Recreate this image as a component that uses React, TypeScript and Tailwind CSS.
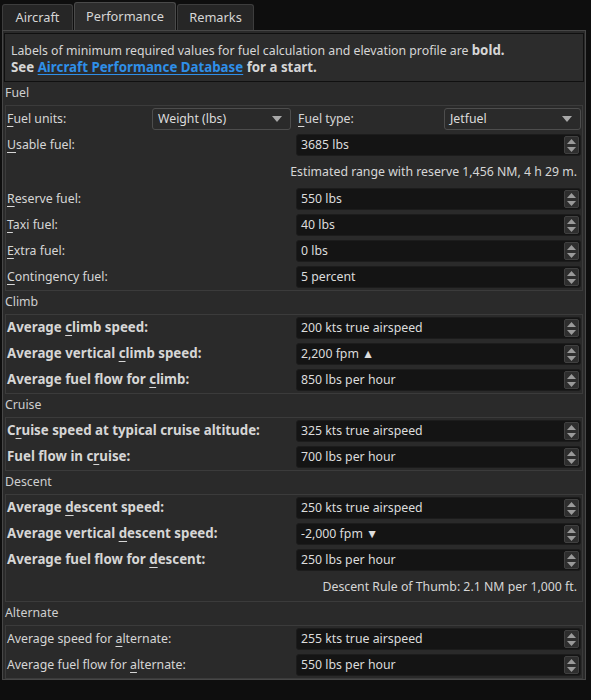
import React from "react";

const font = { fontFamily: '"Noto Sans", "Liberation Sans", sans-serif' };

function M({ pre = "", k, post = "" }: { pre?: string; k: string; post?: string }) {
  return (
    <>
      {pre}
      <span className="underline decoration-1 underline-offset-[3px]">{k}</span>
      {post}
    </>
  );
}

function Spin({ value }: { value: React.ReactNode }) {
  return (
    <div className="flex h-[22px] flex-1 items-stretch rounded-[3px] border border-[#1c1c1c] bg-[#141414]">
      <div className="flex flex-1 items-center pl-[4px] text-[#dcdcdc]">{value}</div>
      <div className="m-[1px] flex w-[15px] flex-col items-center justify-center gap-[3px] rounded-[2px] border border-[#404040] bg-[#2e2e2e]">
        <svg width="9" height="5" viewBox="0 0 9 5"><path d="M4.5 0L9 5H0z" fill="#9a9a9a" /></svg>
        <svg width="9" height="5" viewBox="0 0 9 5"><path d="M0 0h9L4.5 5z" fill="#9a9a9a" /></svg>
      </div>
    </div>
  );
}

function Combo({ value, className }: { value: string; className: string }) {
  return (
    <div className={`flex h-[22px] items-center justify-between rounded-[3px] border border-[#4d4d4d] bg-[#2a2a2a] pl-[5px] pr-[8px] text-[#dcdcdc] ${className}`}>
      <span>{value}</span>
      <svg width="10" height="6" viewBox="0 0 10 6"><path d="M0 0h10L5 6z" fill="#a8a8a8" /></svg>
    </div>
  );
}

function Row({ label, value, bold }: { label: React.ReactNode; value: React.ReactNode; bold?: boolean }) {
  return (
    <div className="flex h-[22px] items-center">
      <div className={`w-[289px] shrink-0 ${bold ? "text-[13.3px] font-bold" : ""}`}>{label}</div>
      <Spin value={value} />
    </div>
  );
}

function Section({ title, children }: { title: string; children: React.ReactNode }) {
  return (
    <>
      <div className="flex h-[23px] items-center pl-[2px] text-[#cfcfcf]">{title}</div>
      <div className="mx-[2px] flex flex-col gap-[4px] border border-[#3b3b3b] px-[1px] pb-[2px] pt-[2px]">
        {children}
      </div>
    </>
  );
}

function Note({ children }: { children: React.ReactNode }) {
  return <div className="flex h-[24px] items-center justify-end pr-[4px]">{children}</div>;
}

export default function App() {
  return (
    <div className="h-[700px] w-[591px] bg-[#0e0e0e] text-[12.3px] text-[#d6d6d6]" style={font}>
      <div className="flex h-[30px] items-end pl-[2px]">
        <div className="flex h-[26px] w-[71px] items-center justify-center rounded-t-[3px] border border-b-0 border-[#3d3d3d] bg-[#262626] text-[12.8px]">
          Aircraft
        </div>
        <div className="ml-[1px] flex h-[28px] w-[102px] items-center justify-center rounded-t-[3px] border border-b-0 border-[#4a4a4a] bg-[#2d2d2d] text-[12.8px]">
          Performance
        </div>
        <div className="ml-[1px] flex h-[26px] w-[77px] items-center justify-center rounded-t-[3px] border border-b-0 border-[#3d3d3d] bg-[#262626] text-[12.8px]">
          Remarks
        </div>
      </div>
      <div className="ml-[2px] h-[650px] w-[584px] border border-[#474747] bg-[#2a2a2a]">
        <div className="mx-[1px] mt-[2px] h-[49px] border border-[#101010] bg-[#2c2c2c] px-[6px] pt-[8px] leading-[16px]">
          <div>
            Labels of minimum required values for fuel calculation and elevation profile are{" "}
            <b className="text-[13.3px]">bold</b>
            <b className="text-[13.3px]">.</b>
          </div>
          <div className="text-[13.3px] font-bold">
            See <span className="text-[#2f8fe8] underline underline-offset-2">Aircraft Performance Database</span> for a start.
          </div>
        </div>

        <Section title="Fuel">
          <div className="flex h-[22px] items-center">
            <div className="w-[145px] shrink-0">
              <M k="F" post="uel units:" />
            </div>
            <Combo value="Weight (lbs)" className="w-[139px]" />
            <div className="w-[153px] shrink-0 pl-[7px]">
              <M k="F" post="uel type:" />
            </div>
            <Combo value="Jetfuel" className="flex-1" />
          </div>
          <Row label={<M k="U" post="sable fuel:" />} value="3685 lbs" />
          <Note>Estimated range with reserve 1,456 NM, 4 h 29 m.</Note>
          <Row label={<M k="R" post="eserve fuel:" />} value="550 lbs" />
          <Row label={<M k="T" post="axi fuel:" />} value="40 lbs" />
          <Row label={<M k="E" post="xtra fuel:" />} value="0 lbs" />
          <Row label={<M k="C" post="ontingency fuel:" />} value="5 percent" />
        </Section>

        <Section title="Climb">
          <Row bold label={<M pre="Average " k="c" post="limb speed:" />} value="200 kts true airspeed" />
          <Row bold label={<M pre="Average vertical " k="c" post="limb speed:" />} value="2,200 fpm ▲" />
          <Row bold label={<M pre="Average fuel flow for " k="c" post="limb:" />} value="850 lbs per hour" />
        </Section>

        <Section title="Cruise">
          <Row bold label={<M pre="C" k="r" post="uise speed at typical cruise altitude:" />} value="325 kts true airspeed" />
          <Row bold label={<M pre="Fuel flow in c" k="r" post="uise:" />} value="700 lbs per hour" />
        </Section>

        <Section title="Descent">
          <Row bold label={<M pre="Average " k="d" post="escent speed:" />} value="250 kts true airspeed" />
          <Row bold label={<M pre="Average vertical " k="d" post="escent speed:" />} value="-2,000 fpm ▼" />
          <Row bold label={<M pre="Average fuel flow for " k="d" post="escent:" />} value="250 lbs per hour" />
          <Note>Descent Rule of Thumb: 2.1 NM per 1,000 ft.</Note>
        </Section>

        <Section title="Alternate">
          <Row label={<M pre="Average speed for " k="a" post="lternate:" />} value="255 kts true airspeed" />
          <Row label={<M pre="Average fuel flow for " k="a" post="lternate:" />} value="550 lbs per hour" />
        </Section>
      </div>
    </div>
  );
}
